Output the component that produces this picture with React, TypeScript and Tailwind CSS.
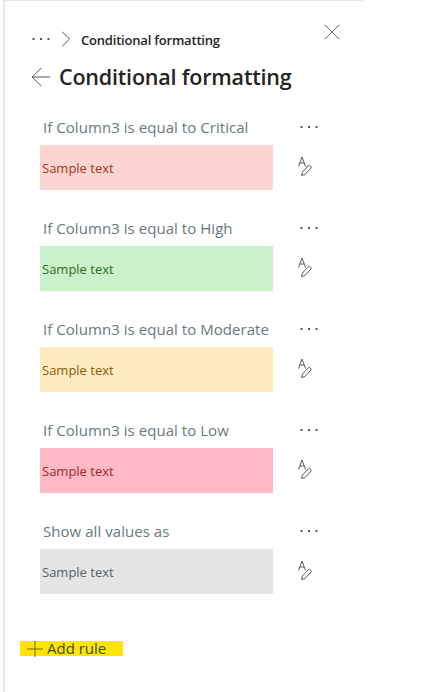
import React from 'react';
import { X, ChevronRight, ArrowLeft, Plus } from 'lucide-react';

const rules = [
  { label: 'If Column3 is equal to Critical', bg: 'bg-[#fed4d0]', fg: 'text-[#a5371b]' },
  { label: 'If Column3 is equal to High', bg: 'bg-[#cbf1cb]', fg: 'text-[#2f6b1c]' },
  { label: 'If Column3 is equal to Moderate', bg: 'bg-[#feeac0]', fg: 'text-[#8a5a0a]' },
  { label: 'If Column3 is equal to Low', bg: 'bg-[#fdb9c4]', fg: 'text-[#a4262c]' },
  { label: 'Show all values as', bg: 'bg-[#e5e5e5]', fg: 'text-[#55606a]' },
];

const Dots = ({ className }: { className?: string }) => (
  <svg width="18" height="4" viewBox="0 0 18 4" className={className}>
    <rect x="0.5" y="1" width="2" height="2" fill="#555" />
    <rect x="8" y="1" width="2" height="2" fill="#555" />
    <rect x="15.5" y="1" width="2" height="2" fill="#555" />
  </svg>
);

const FormatIcon = () => (
  <svg width="16" height="21" viewBox="0 0 16 21" fill="none" stroke="#5a5a5a" strokeWidth="1">
    <path d="M0.5 10.5 L4 1 L7.5 10.5 M1.8 7 H6.2" />
    <path d="M3.5 19.5 L4.5 16 L10.5 9.5 Q11.5 9 12.5 10 Q13.5 11 13 12 L7 18.5 Z" />
  </svg>
);

export default function App() {
  return (
    <div className="w-[430px] h-[692px] bg-white overflow-hidden font-['Open_Sans','Noto_Sans',sans-serif]">
      <div className="relative w-[360px] h-[692px] border-t border-l-2 border-[#e8e8e8] ml-[3px] pl-[27px] pt-[22px] flex flex-col">
        <X size={28} strokeWidth={0.85} color="#5f6b76" className="absolute left-[313px] top-[17px]" />
        <div className="flex items-start h-[32px]">
          <Dots className="mt-[14px]" />
          <ChevronRight size={28} strokeWidth={0.8} color="#444" className="ml-[2px] mt-[2px]" />
          <span className="ml-[1px] mt-[6px] text-[13px] leading-[22px] font-semibold tracking-[-0.2px] text-[#252423] whitespace-nowrap">
            Conditional formatting
          </span>
        </div>
        <div className="flex items-center h-[34px] mt-[5px]">
          <ArrowLeft size={30} strokeWidth={0.8} color="#555" className="-ml-[6px]" />
          <span className="ml-[3px] text-[21.5px] font-semibold tracking-[-0.2px] text-[#252423] whitespace-nowrap">
            Conditional formatting
          </span>
        </div>
        <div className="mt-[21px] flex flex-col gap-[26px] w-[300px]">
          {rules.map((r) => (
            <div key={r.label} className="flex flex-col">
              <div className="flex items-center h-[24px] pl-[11px] relative">
                <span className="text-[15px] text-[#69797e] whitespace-nowrap tracking-[0.05px]">{r.label}</span>
                <Dots className="absolute left-[268px] top-[10px]" />
              </div>
              <div className="flex items-center mt-[6px]">
                <div className={`w-[233px] h-[45px] ml-[8px] pl-[2px] pt-[3px] flex items-center text-[13px] ${r.bg} ${r.fg}`}>
                  Sample text
                </div>
                <div className="ml-[25px] -mt-[2px]">
                  <FormatIcon />
                </div>
              </div>
            </div>
          ))}
        </div>
        <div className="mt-[47px] -ml-[12px] w-[103px] h-[15px] bg-[#ffe600] flex items-center text-[15px] text-[#3f4a1a]">
          <Plus size={26} strokeWidth={0.85} color="#5c5a10" className="ml-[2px] shrink-0" />
          <span className="-ml-[1px] whitespace-nowrap">Add rule</span>
        </div>
      </div>
    </div>
  );
}
